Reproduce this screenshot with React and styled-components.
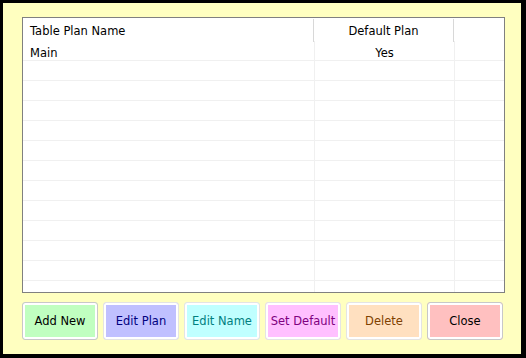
import styled, { createGlobalStyle } from 'styled-components';

const GlobalStyle = createGlobalStyle`
    html, body {
        margin: 0;
        padding: 0;
        background: #000;
    }
    body {
        font-family: 'DejaVu Sans', 'Noto Sans', sans-serif;
        font-size: 11.5px;
    }
`;

const plans = [{ name: 'Main', isDefault: true }];
const emptyRows = 12;

const buttons = [
    { label: 'Add New', bg: '#c0ffc0', color: '#000000', edge: '#c8c8c8' },
    { label: 'Edit Plan', bg: '#c0c0ff', color: '#000080', edge: '#e4e4e4' },
    { label: 'Edit Name', bg: '#c0ffff', color: '#008080', edge: '#e4e4e4' },
    { label: 'Set Default', bg: '#ffc0ff', color: '#800080', edge: '#e4e4e4' },
    { label: 'Delete', bg: '#ffe0c0', color: '#804000', edge: '#e4e4e4' },
    { label: 'Close', bg: '#ffc0c0', color: '#000000', edge: '#c8c8c8' },
];

const App = () => {
    return (
        <>
            <GlobalStyle />
            <Window>
                <Grid>
                    <HeaderRow>
                        <HeadCell $w={291}>Table Plan Name</HeadCell>
                        <HeadCell $w={140} $center>
                            Default Plan
                        </HeadCell>
                        <HeadCell $fill />
                    </HeaderRow>
                    {plans.map(plan => (
                        <Row key={plan.name}>
                            <Cell $w={292}>{plan.name}</Cell>
                            <Cell $w={140} $center>
                                {plan.isDefault ? 'Yes' : 'No'}
                            </Cell>
                            <Cell $fill />
                        </Row>
                    ))}
                    {Array.from({ length: emptyRows }).map((_, i) => (
                        <Row key={i}>
                            <Cell $w={292} />
                            <Cell $w={140} />
                            <Cell $fill />
                        </Row>
                    ))}
                </Grid>
                <ButtonBar>
                    {buttons.map(b => (
                        <Button key={b.label} $bg={b.bg} $color={b.color} $edge={b.edge}>
                            {b.label}
                        </Button>
                    ))}
                </ButtonBar>
            </Window>
        </>
    );
};
export default App;

const Window = styled.div`
    box-sizing: border-box;
    width: 518px;
    height: 351px;
    margin: 3px 0 0 3px;
    padding: 14px 0 0 19px;
    background: #ffffc0;
    display: flex;
    flex-direction: column;
`;

const Grid = styled.div`
    box-sizing: border-box;
    width: 483px;
    height: 276px;
    border: 1px solid #808080;
    background: #fff;
    overflow: hidden;
    display: flex;
    flex-direction: column;
`;

const HeaderRow = styled.div`
    display: flex;
    height: 23px;
    flex-shrink: 0;
`;

const HeadCell = styled.div`
    box-sizing: border-box;
    ${p => (p.$fill ? 'flex: 1;' : `width: ${p.$w}px;`)}
    height: 23px;
    margin-top: 1px;
    padding: 5px 0 0 7px;
    ${p => p.$center && 'padding-left: 0; text-align: center;'}
    color: #000;
    white-space: nowrap;
    border-right: ${p => (p.$fill ? 'none' : '1px solid #d8d8d8')};
`;

const Row = styled.div`
    box-sizing: border-box;
    display: flex;
    height: 20px;
    flex-shrink: 0;
    border-bottom: 1px solid #f0f0f0;
`;

const Cell = styled.div`
    box-sizing: border-box;
    ${p => (p.$fill ? 'flex: 1;' : `width: ${p.$w}px;`)}
    padding: 5px 0 0 7px;
    ${p => p.$center && 'padding-left: 0; text-align: center;'}
    color: #000;
    white-space: nowrap;
    border-right: ${p => (p.$fill ? 'none' : '1px solid #f0f0f0')};
`;

const ButtonBar = styled.div`
    display: flex;
    gap: 5px;
    margin-top: 9px;
`;

const Button = styled.button`
    box-sizing: border-box;
    width: 76px;
    height: 38px;
    padding: 0;
    border: 1px solid ${p => p.$edge};
    border-radius: 3px;
    box-shadow: inset 0 0 0 2px #fff;
    background: ${p => p.$bg};
    color: ${p => p.$color};
    font-family: 'DejaVu Sans', 'Noto Sans', sans-serif;
    font-size: 11.5px;
    cursor: pointer;
`;
